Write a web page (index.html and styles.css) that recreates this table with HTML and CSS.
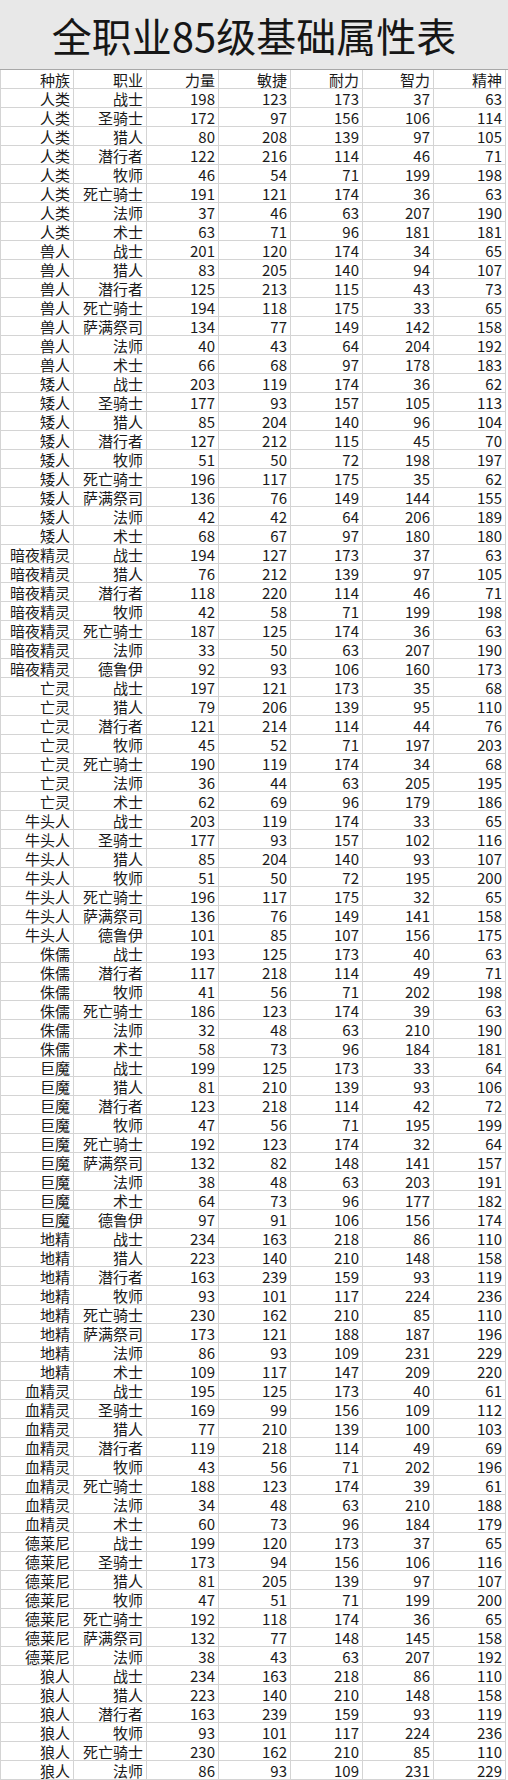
FILE: index.html
```html
<!DOCTYPE html>
<html lang="zh-CN">
<head>
<meta charset="utf-8">
<title>全职业85级基础属性表</title>
<link rel="stylesheet" href="styles.css">
</head>
<body>
<div class="title">全职业85级基础属性表</div>
<div class="sheet">
<div class="row"><span>种族</span><span>职业</span><span>力量</span><span>敏捷</span><span>耐力</span><span>智力</span><span>精神</span></div>
<div class="row"><span>人类</span><span>战士</span><span>198</span><span>123</span><span>173</span><span>37</span><span>63</span></div>
<div class="row"><span>人类</span><span>圣骑士</span><span>172</span><span>97</span><span>156</span><span>106</span><span>114</span></div>
<div class="row"><span>人类</span><span>猎人</span><span>80</span><span>208</span><span>139</span><span>97</span><span>105</span></div>
<div class="row"><span>人类</span><span>潜行者</span><span>122</span><span>216</span><span>114</span><span>46</span><span>71</span></div>
<div class="row"><span>人类</span><span>牧师</span><span>46</span><span>54</span><span>71</span><span>199</span><span>198</span></div>
<div class="row"><span>人类</span><span>死亡骑士</span><span>191</span><span>121</span><span>174</span><span>36</span><span>63</span></div>
<div class="row"><span>人类</span><span>法师</span><span>37</span><span>46</span><span>63</span><span>207</span><span>190</span></div>
<div class="row"><span>人类</span><span>术士</span><span>63</span><span>71</span><span>96</span><span>181</span><span>181</span></div>
<div class="row"><span>兽人</span><span>战士</span><span>201</span><span>120</span><span>174</span><span>34</span><span>65</span></div>
<div class="row"><span>兽人</span><span>猎人</span><span>83</span><span>205</span><span>140</span><span>94</span><span>107</span></div>
<div class="row"><span>兽人</span><span>潜行者</span><span>125</span><span>213</span><span>115</span><span>43</span><span>73</span></div>
<div class="row"><span>兽人</span><span>死亡骑士</span><span>194</span><span>118</span><span>175</span><span>33</span><span>65</span></div>
<div class="row"><span>兽人</span><span>萨满祭司</span><span>134</span><span>77</span><span>149</span><span>142</span><span>158</span></div>
<div class="row"><span>兽人</span><span>法师</span><span>40</span><span>43</span><span>64</span><span>204</span><span>192</span></div>
<div class="row"><span>兽人</span><span>术士</span><span>66</span><span>68</span><span>97</span><span>178</span><span>183</span></div>
<div class="row"><span>矮人</span><span>战士</span><span>203</span><span>119</span><span>174</span><span>36</span><span>62</span></div>
<div class="row"><span>矮人</span><span>圣骑士</span><span>177</span><span>93</span><span>157</span><span>105</span><span>113</span></div>
<div class="row"><span>矮人</span><span>猎人</span><span>85</span><span>204</span><span>140</span><span>96</span><span>104</span></div>
<div class="row"><span>矮人</span><span>潜行者</span><span>127</span><span>212</span><span>115</span><span>45</span><span>70</span></div>
<div class="row"><span>矮人</span><span>牧师</span><span>51</span><span>50</span><span>72</span><span>198</span><span>197</span></div>
<div class="row"><span>矮人</span><span>死亡骑士</span><span>196</span><span>117</span><span>175</span><span>35</span><span>62</span></div>
<div class="row"><span>矮人</span><span>萨满祭司</span><span>136</span><span>76</span><span>149</span><span>144</span><span>155</span></div>
<div class="row"><span>矮人</span><span>法师</span><span>42</span><span>42</span><span>64</span><span>206</span><span>189</span></div>
<div class="row"><span>矮人</span><span>术士</span><span>68</span><span>67</span><span>97</span><span>180</span><span>180</span></div>
<div class="row"><span>暗夜精灵</span><span>战士</span><span>194</span><span>127</span><span>173</span><span>37</span><span>63</span></div>
<div class="row"><span>暗夜精灵</span><span>猎人</span><span>76</span><span>212</span><span>139</span><span>97</span><span>105</span></div>
<div class="row"><span>暗夜精灵</span><span>潜行者</span><span>118</span><span>220</span><span>114</span><span>46</span><span>71</span></div>
<div class="row"><span>暗夜精灵</span><span>牧师</span><span>42</span><span>58</span><span>71</span><span>199</span><span>198</span></div>
<div class="row"><span>暗夜精灵</span><span>死亡骑士</span><span>187</span><span>125</span><span>174</span><span>36</span><span>63</span></div>
<div class="row"><span>暗夜精灵</span><span>法师</span><span>33</span><span>50</span><span>63</span><span>207</span><span>190</span></div>
<div class="row"><span>暗夜精灵</span><span>德鲁伊</span><span>92</span><span>93</span><span>106</span><span>160</span><span>173</span></div>
<div class="row"><span>亡灵</span><span>战士</span><span>197</span><span>121</span><span>173</span><span>35</span><span>68</span></div>
<div class="row"><span>亡灵</span><span>猎人</span><span>79</span><span>206</span><span>139</span><span>95</span><span>110</span></div>
<div class="row"><span>亡灵</span><span>潜行者</span><span>121</span><span>214</span><span>114</span><span>44</span><span>76</span></div>
<div class="row"><span>亡灵</span><span>牧师</span><span>45</span><span>52</span><span>71</span><span>197</span><span>203</span></div>
<div class="row"><span>亡灵</span><span>死亡骑士</span><span>190</span><span>119</span><span>174</span><span>34</span><span>68</span></div>
<div class="row"><span>亡灵</span><span>法师</span><span>36</span><span>44</span><span>63</span><span>205</span><span>195</span></div>
<div class="row"><span>亡灵</span><span>术士</span><span>62</span><span>69</span><span>96</span><span>179</span><span>186</span></div>
<div class="row"><span>牛头人</span><span>战士</span><span>203</span><span>119</span><span>174</span><span>33</span><span>65</span></div>
<div class="row"><span>牛头人</span><span>圣骑士</span><span>177</span><span>93</span><span>157</span><span>102</span><span>116</span></div>
<div class="row"><span>牛头人</span><span>猎人</span><span>85</span><span>204</span><span>140</span><span>93</span><span>107</span></div>
<div class="row"><span>牛头人</span><span>牧师</span><span>51</span><span>50</span><span>72</span><span>195</span><span>200</span></div>
<div class="row"><span>牛头人</span><span>死亡骑士</span><span>196</span><span>117</span><span>175</span><span>32</span><span>65</span></div>
<div class="row"><span>牛头人</span><span>萨满祭司</span><span>136</span><span>76</span><span>149</span><span>141</span><span>158</span></div>
<div class="row"><span>牛头人</span><span>德鲁伊</span><span>101</span><span>85</span><span>107</span><span>156</span><span>175</span></div>
<div class="row"><span>侏儒</span><span>战士</span><span>193</span><span>125</span><span>173</span><span>40</span><span>63</span></div>
<div class="row"><span>侏儒</span><span>潜行者</span><span>117</span><span>218</span><span>114</span><span>49</span><span>71</span></div>
<div class="row"><span>侏儒</span><span>牧师</span><span>41</span><span>56</span><span>71</span><span>202</span><span>198</span></div>
<div class="row"><span>侏儒</span><span>死亡骑士</span><span>186</span><span>123</span><span>174</span><span>39</span><span>63</span></div>
<div class="row"><span>侏儒</span><span>法师</span><span>32</span><span>48</span><span>63</span><span>210</span><span>190</span></div>
<div class="row"><span>侏儒</span><span>术士</span><span>58</span><span>73</span><span>96</span><span>184</span><span>181</span></div>
<div class="row"><span>巨魔</span><span>战士</span><span>199</span><span>125</span><span>173</span><span>33</span><span>64</span></div>
<div class="row"><span>巨魔</span><span>猎人</span><span>81</span><span>210</span><span>139</span><span>93</span><span>106</span></div>
<div class="row"><span>巨魔</span><span>潜行者</span><span>123</span><span>218</span><span>114</span><span>42</span><span>72</span></div>
<div class="row"><span>巨魔</span><span>牧师</span><span>47</span><span>56</span><span>71</span><span>195</span><span>199</span></div>
<div class="row"><span>巨魔</span><span>死亡骑士</span><span>192</span><span>123</span><span>174</span><span>32</span><span>64</span></div>
<div class="row"><span>巨魔</span><span>萨满祭司</span><span>132</span><span>82</span><span>148</span><span>141</span><span>157</span></div>
<div class="row"><span>巨魔</span><span>法师</span><span>38</span><span>48</span><span>63</span><span>203</span><span>191</span></div>
<div class="row"><span>巨魔</span><span>术士</span><span>64</span><span>73</span><span>96</span><span>177</span><span>182</span></div>
<div class="row"><span>巨魔</span><span>德鲁伊</span><span>97</span><span>91</span><span>106</span><span>156</span><span>174</span></div>
<div class="row"><span>地精</span><span>战士</span><span>234</span><span>163</span><span>218</span><span>86</span><span>110</span></div>
<div class="row"><span>地精</span><span>猎人</span><span>223</span><span>140</span><span>210</span><span>148</span><span>158</span></div>
<div class="row"><span>地精</span><span>潜行者</span><span>163</span><span>239</span><span>159</span><span>93</span><span>119</span></div>
<div class="row"><span>地精</span><span>牧师</span><span>93</span><span>101</span><span>117</span><span>224</span><span>236</span></div>
<div class="row"><span>地精</span><span>死亡骑士</span><span>230</span><span>162</span><span>210</span><span>85</span><span>110</span></div>
<div class="row"><span>地精</span><span>萨满祭司</span><span>173</span><span>121</span><span>188</span><span>187</span><span>196</span></div>
<div class="row"><span>地精</span><span>法师</span><span>86</span><span>93</span><span>109</span><span>231</span><span>229</span></div>
<div class="row"><span>地精</span><span>术士</span><span>109</span><span>117</span><span>147</span><span>209</span><span>220</span></div>
<div class="row"><span>血精灵</span><span>战士</span><span>195</span><span>125</span><span>173</span><span>40</span><span>61</span></div>
<div class="row"><span>血精灵</span><span>圣骑士</span><span>169</span><span>99</span><span>156</span><span>109</span><span>112</span></div>
<div class="row"><span>血精灵</span><span>猎人</span><span>77</span><span>210</span><span>139</span><span>100</span><span>103</span></div>
<div class="row"><span>血精灵</span><span>潜行者</span><span>119</span><span>218</span><span>114</span><span>49</span><span>69</span></div>
<div class="row"><span>血精灵</span><span>牧师</span><span>43</span><span>56</span><span>71</span><span>202</span><span>196</span></div>
<div class="row"><span>血精灵</span><span>死亡骑士</span><span>188</span><span>123</span><span>174</span><span>39</span><span>61</span></div>
<div class="row"><span>血精灵</span><span>法师</span><span>34</span><span>48</span><span>63</span><span>210</span><span>188</span></div>
<div class="row"><span>血精灵</span><span>术士</span><span>60</span><span>73</span><span>96</span><span>184</span><span>179</span></div>
<div class="row"><span>德莱尼</span><span>战士</span><span>199</span><span>120</span><span>173</span><span>37</span><span>65</span></div>
<div class="row"><span>德莱尼</span><span>圣骑士</span><span>173</span><span>94</span><span>156</span><span>106</span><span>116</span></div>
<div class="row"><span>德莱尼</span><span>猎人</span><span>81</span><span>205</span><span>139</span><span>97</span><span>107</span></div>
<div class="row"><span>德莱尼</span><span>牧师</span><span>47</span><span>51</span><span>71</span><span>199</span><span>200</span></div>
<div class="row"><span>德莱尼</span><span>死亡骑士</span><span>192</span><span>118</span><span>174</span><span>36</span><span>65</span></div>
<div class="row"><span>德莱尼</span><span>萨满祭司</span><span>132</span><span>77</span><span>148</span><span>145</span><span>158</span></div>
<div class="row"><span>德莱尼</span><span>法师</span><span>38</span><span>43</span><span>63</span><span>207</span><span>192</span></div>
<div class="row"><span>狼人</span><span>战士</span><span>234</span><span>163</span><span>218</span><span>86</span><span>110</span></div>
<div class="row"><span>狼人</span><span>猎人</span><span>223</span><span>140</span><span>210</span><span>148</span><span>158</span></div>
<div class="row"><span>狼人</span><span>潜行者</span><span>163</span><span>239</span><span>159</span><span>93</span><span>119</span></div>
<div class="row"><span>狼人</span><span>牧师</span><span>93</span><span>101</span><span>117</span><span>224</span><span>236</span></div>
<div class="row"><span>狼人</span><span>死亡骑士</span><span>230</span><span>162</span><span>210</span><span>85</span><span>110</span></div>
<div class="row"><span>狼人</span><span>法师</span><span>86</span><span>93</span><span>109</span><span>231</span><span>229</span></div>
</div>
</body>
</html>
```

FILE: styles.css
```css
html, body {
  margin: 0;
  padding: 0;
  background: #ffffff;
}

body {
  font-family: "Noto Sans CJK SC", "Liberation Sans", sans-serif;
  color: #1a1a1a;
}

.title {
  height: 70px;
  background: #e8e8e8;
  border-bottom: 1px solid #a8a8a8;
  display: flex;
  align-items: center;
  justify-content: center;
  font-size: 40px;
  line-height: 1;
  color: #161616;
  padding-top: 1px;
  box-sizing: border-box;
}

.sheet {
  display: flex;
  flex-direction: column;
}

.row {
  display: grid;
  grid-template-columns: 74px 73px 72px 72px 72px 71px 72px;
  height: 19px;
}

.row span {
  box-sizing: border-box;
  height: 19px;
  border-right: 1px solid #d4d4d4;
  border-bottom: 1px solid #d4d4d4;
  text-align: right;
  padding-right: 3px;
  font-size: 15px;
  line-height: 19px;
  white-space: nowrap;
  overflow: hidden;
}

.row span:first-child {
  border-left: 1px solid #d4d4d4;
}
```
